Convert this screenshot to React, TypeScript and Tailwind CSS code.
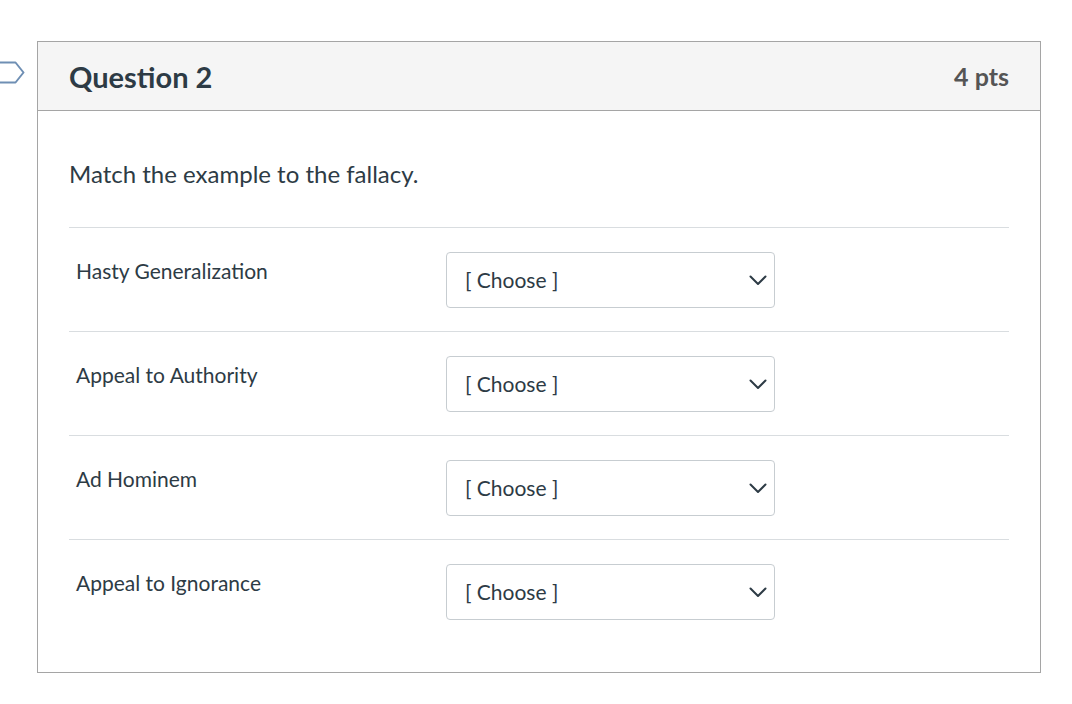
const ROWS = ['Hasty Generalization', 'Appeal to Authority', 'Ad Hominem', 'Appeal to Ignorance'];

function Chevron() {
  return (
    <svg width="18" height="11" viewBox="0 0 18 11" fill="none" className="shrink-0">
      <path d="M1.5 1.5 L9 9 L16.5 1.5" stroke="#2d3b45" strokeWidth="2" strokeLinecap="round" strokeLinejoin="round" />
    </svg>
  );
}

function Marker() {
  return (
    <svg width="26" height="24" viewBox="0 0 26 24" fill="none">
      <path d="M-4 1.5 H15.5 L23.5 11.5 L15.5 21.5 H-4" stroke="#6f8fb4" strokeWidth="2" strokeLinejoin="round" />
    </svg>
  );
}

export default function App() {
  return (
    <div className="relative min-h-[704px] w-[1072px] bg-white font-['Lato','Liberation_Sans',sans-serif] text-[#2d3b45]">
      {/* flag marker beside the question */}
      <div className="absolute left-0 top-[61px]">
        <Marker />
      </div>

      <div className="pl-[37px] pt-[41px]">
        <div className="w-[1004px] border border-[#a5a5a5]">
          {/* Header */}
          <div className="flex h-[69px] items-center justify-between border-b border-[#a5a5a5] bg-[#f5f5f5] px-[31px]">
            <h2 className="text-[29px] font-bold leading-none">Question 2</h2>
            <span className="text-[25px] font-bold leading-none text-[#555555]">4 pts</span>
          </div>

          {/* Body */}
          <div className="px-[31px] pb-[29px] pt-[45px]">
            <p className="mb-[36px] text-[24px] leading-[35px]">Match the example to the fallacy.</p>
            {ROWS.map((label) => (
              <div key={label} className="flex items-start border-t border-[#d9dde0] pb-[23px] pt-6">
                <div className="w-[377px] pl-[7px] pt-[4px] text-[21px] leading-[30px]">{label}</div>
                <div className="flex h-[56px] w-[329px] items-center justify-between rounded-[4px] border border-[#c7cdd1] bg-white pl-[18px] pr-[7px]">
                  <span className="text-[21px]">[ Choose ]</span>
                  <Chevron />
                </div>
              </div>
            ))}
          </div>
        </div>
      </div>
    </div>
  );
}
